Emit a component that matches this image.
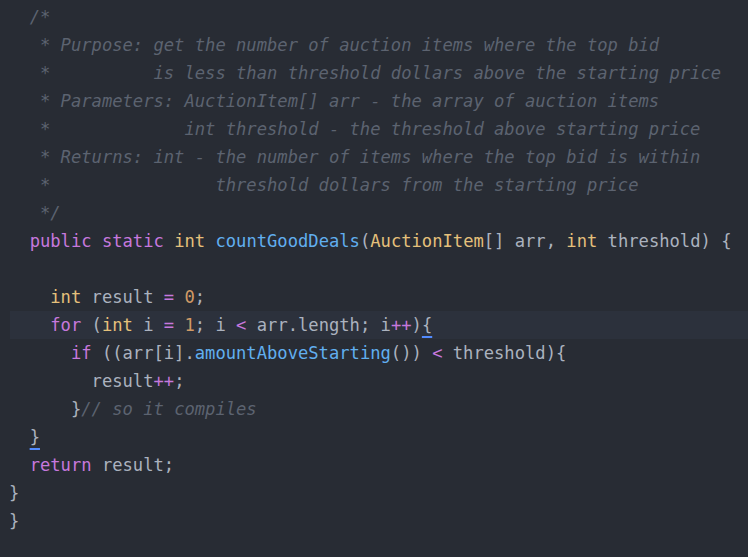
import { FC, ReactElement } from "react";

type Seg = [string, string?];

const C = "text-[#5c6370] italic";
const K = "text-[#c678dd]";
const T = "text-[#e5c07b]";
const F = "text-[#61afef]";
const N = "text-[#d19a66]";
const M = "text-[#c678dd]";
const U = "underline decoration-[#528bff] decoration-2 underline-offset-[5px]";

const lines: Seg[][] = [
  [["  /*", C]],
  [["   * Purpose: get the number of auction items where the top bid", C]],
  [["   *          is less than threshold dollars above the starting price", C]],
  [["   * Parameters: AuctionItem[] arr - the array of auction items", C]],
  [["   *             int threshold - the threshold above starting price", C]],
  [["   * Returns: int - the number of items where the top bid is within", C]],
  [["   *                threshold dollars from the starting price", C]],
  [["   */", C]],
  [["  "], ["public", K], [" "], ["static", K], [" "], ["int", T], [" "], ["countGoodDeals", F], ["("], ["AuctionItem", T], ["[] arr, "], ["int", T], [" threshold) {"]],
  [[""]],
  [["    "], ["int", T], [" result "], ["=", M], [" "], ["0", N], [";"]],
  [["    "], ["for", K], [" ("], ["int", T], [" i "], ["=", M], [" "], ["1", N], ["; i "], ["<", M], [" arr.length; i"], ["++", M], [")"], ["{", U]],
  [["      "], ["if", K], [" ((arr[i]."], ["amountAboveStarting", F], ["()) "], ["<", M], [" threshold){"]],
  [["        result"], ["++", M], [";"]],
  [["      }"], ["// so it compiles", C]],
  [["  "], ["}", U]],
  [["  "], ["return", K], [" result;"]],
  [["}"]],
  [["}"]],
];

const Line: FC<{ segs: Seg[]; active?: boolean }> = ({ segs, active }): ReactElement => (
  <div className={`h-[28px] whitespace-pre leading-[28px] ${active ? "bg-[#2c313c]" : ""}`}>
    <span className="-ml-px inline-block">
      {segs.map(([text, cls], i) => (
        <span className={cls} key={i}>
          {text}
        </span>
      ))}
    </span>
  </div>
);

export default function App(): ReactElement {
  return (
    <div className="h-[557px] w-[748px] overflow-hidden bg-[#282c34] pl-[10px] pt-[3px] font-['DejaVu_Sans_Mono',monospace] text-[17.15px] text-[#abb2bf]">
      {lines.map((segs, i) => (
        <Line active={i === 11} key={i} segs={segs} />
      ))}
    </div>
  );
}
